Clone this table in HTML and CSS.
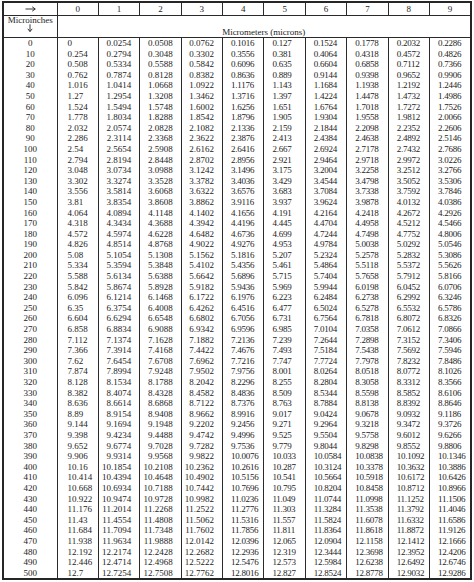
FILE: index.html
```html
<!DOCTYPE html>
<html lang="en">
<head>
<meta charset="utf-8">
<title>Microinches to micrometers</title>
<link rel="stylesheet" href="styles.css">
</head>
<body>
<div class="page">
<table class="conv">
<colgroup><col class="c-lab"><col span="10" class="c-val"></colgroup>
<thead>
<tr class="h1"><th class="corner"><svg class="right" width="11" height="6" viewBox="0 0 11 6" aria-label="→"><path d="M0.5 3 H10" stroke="#222" stroke-width="0.9" fill="none"/><path d="M7.2 0.8 L10.3 3 L7.2 5.2" stroke="#222" stroke-width="0.9" fill="none"/></svg></th><th>0</th><th>1</th><th>2</th><th>3</th><th>4</th><th>5</th><th>6</th><th>7</th><th>8</th><th>9</th></tr>
<tr class="h2"><th class="lab-head"><span class="lab-text">Microinches</span><svg class="down" width="6" height="8" viewBox="0 0 6 8" aria-label="↓"><path d="M3 0.3 V7.4" stroke="#222" stroke-width="0.9" fill="none"/><path d="M0.8 4.8 L3 7.6 L5.2 4.8" stroke="#222" stroke-width="0.9" fill="none"/></svg></th><th class="unit" colspan="10">Micrometers (microns)</th></tr>
</thead>
<tbody>
<tr><td>0</td><td>0</td><td>0.0254</td><td>0.0508</td><td>0.0762</td><td>0.1016</td><td>0.127</td><td>0.1524</td><td>0.1778</td><td>0.2032</td><td>0.2286</td></tr>
<tr><td>10</td><td>0.254</td><td>0.2794</td><td>0.3048</td><td>0.3302</td><td>0.3556</td><td>0.381</td><td>0.4064</td><td>0.4318</td><td>0.4572</td><td>0.4826</td></tr>
<tr><td>20</td><td>0.508</td><td>0.5334</td><td>0.5588</td><td>0.5842</td><td>0.6096</td><td>0.635</td><td>0.6604</td><td>0.6858</td><td>0.7112</td><td>0.7366</td></tr>
<tr><td>30</td><td>0.762</td><td>0.7874</td><td>0.8128</td><td>0.8382</td><td>0.8636</td><td>0.889</td><td>0.9144</td><td>0.9398</td><td>0.9652</td><td>0.9906</td></tr>
<tr><td>40</td><td>1.016</td><td>1.0414</td><td>1.0668</td><td>1.0922</td><td>1.1176</td><td>1.143</td><td>1.1684</td><td>1.1938</td><td>1.2192</td><td>1.2446</td></tr>
<tr><td>50</td><td>1.27</td><td>1.2954</td><td>1.3208</td><td>1.3462</td><td>1.3716</td><td>1.397</td><td>1.4224</td><td>1.4478</td><td>1.4732</td><td>1.4986</td></tr>
<tr><td>60</td><td>1.524</td><td>1.5494</td><td>1.5748</td><td>1.6002</td><td>1.6256</td><td>1.651</td><td>1.6764</td><td>1.7018</td><td>1.7272</td><td>1.7526</td></tr>
<tr><td>70</td><td>1.778</td><td>1.8034</td><td>1.8288</td><td>1.8542</td><td>1.8796</td><td>1.905</td><td>1.9304</td><td>1.9558</td><td>1.9812</td><td>2.0066</td></tr>
<tr><td>80</td><td>2.032</td><td>2.0574</td><td>2.0828</td><td>2.1082</td><td>2.1336</td><td>2.159</td><td>2.1844</td><td>2.2098</td><td>2.2352</td><td>2.2606</td></tr>
<tr><td>90</td><td>2.286</td><td>2.3114</td><td>2.3368</td><td>2.3622</td><td>2.3876</td><td>2.413</td><td>2.4384</td><td>2.4638</td><td>2.4892</td><td>2.5146</td></tr>
<tr><td>100</td><td>2.54</td><td>2.5654</td><td>2.5908</td><td>2.6162</td><td>2.6416</td><td>2.667</td><td>2.6924</td><td>2.7178</td><td>2.7432</td><td>2.7686</td></tr>
<tr><td>110</td><td>2.794</td><td>2.8194</td><td>2.8448</td><td>2.8702</td><td>2.8956</td><td>2.921</td><td>2.9464</td><td>2.9718</td><td>2.9972</td><td>3.0226</td></tr>
<tr><td>120</td><td>3.048</td><td>3.0734</td><td>3.0988</td><td>3.1242</td><td>3.1496</td><td>3.175</td><td>3.2004</td><td>3.2258</td><td>3.2512</td><td>3.2766</td></tr>
<tr><td>130</td><td>3.302</td><td>3.3274</td><td>3.3528</td><td>3.3782</td><td>3.4036</td><td>3.429</td><td>3.4544</td><td>3.4798</td><td>3.5052</td><td>3.5306</td></tr>
<tr><td>140</td><td>3.556</td><td>3.5814</td><td>3.6068</td><td>3.6322</td><td>3.6576</td><td>3.683</td><td>3.7084</td><td>3.7338</td><td>3.7592</td><td>3.7846</td></tr>
<tr><td>150</td><td>3.81</td><td>3.8354</td><td>3.8608</td><td>3.8862</td><td>3.9116</td><td>3.937</td><td>3.9624</td><td>3.9878</td><td>4.0132</td><td>4.0386</td></tr>
<tr><td>160</td><td>4.064</td><td>4.0894</td><td>4.1148</td><td>4.1402</td><td>4.1656</td><td>4.191</td><td>4.2164</td><td>4.2418</td><td>4.2672</td><td>4.2926</td></tr>
<tr><td>170</td><td>4.318</td><td>4.3434</td><td>4.3688</td><td>4.3942</td><td>4.4196</td><td>4.445</td><td>4.4704</td><td>4.4958</td><td>4.5212</td><td>4.5466</td></tr>
<tr><td>180</td><td>4.572</td><td>4.5974</td><td>4.6228</td><td>4.6482</td><td>4.6736</td><td>4.699</td><td>4.7244</td><td>4.7498</td><td>4.7752</td><td>4.8006</td></tr>
<tr><td>190</td><td>4.826</td><td>4.8514</td><td>4.8768</td><td>4.9022</td><td>4.9276</td><td>4.953</td><td>4.9784</td><td>5.0038</td><td>5.0292</td><td>5.0546</td></tr>
<tr><td>200</td><td>5.08</td><td>5.1054</td><td>5.1308</td><td>5.1562</td><td>5.1816</td><td>5.207</td><td>5.2324</td><td>5.2578</td><td>5.2832</td><td>5.3086</td></tr>
<tr><td>210</td><td>5.334</td><td>5.3594</td><td>5.3848</td><td>5.4102</td><td>5.4356</td><td>5.461</td><td>5.4864</td><td>5.5118</td><td>5.5372</td><td>5.5626</td></tr>
<tr><td>220</td><td>5.588</td><td>5.6134</td><td>5.6388</td><td>5.6642</td><td>5.6896</td><td>5.715</td><td>5.7404</td><td>5.7658</td><td>5.7912</td><td>5.8166</td></tr>
<tr><td>230</td><td>5.842</td><td>5.8674</td><td>5.8928</td><td>5.9182</td><td>5.9436</td><td>5.969</td><td>5.9944</td><td>6.0198</td><td>6.0452</td><td>6.0706</td></tr>
<tr><td>240</td><td>6.096</td><td>6.1214</td><td>6.1468</td><td>6.1722</td><td>6.1976</td><td>6.223</td><td>6.2484</td><td>6.2738</td><td>6.2992</td><td>6.3246</td></tr>
<tr><td>250</td><td>6.35</td><td>6.3754</td><td>6.4008</td><td>6.4262</td><td>6.4516</td><td>6.477</td><td>6.5024</td><td>6.5278</td><td>6.5532</td><td>6.5786</td></tr>
<tr><td>260</td><td>6.604</td><td>6.6294</td><td>6.6548</td><td>6.6802</td><td>6.7056</td><td>6.731</td><td>6.7564</td><td>6.7818</td><td>6.8072</td><td>6.8326</td></tr>
<tr><td>270</td><td>6.858</td><td>6.8834</td><td>6.9088</td><td>6.9342</td><td>6.9596</td><td>6.985</td><td>7.0104</td><td>7.0358</td><td>7.0612</td><td>7.0866</td></tr>
<tr><td>280</td><td>7.112</td><td>7.1374</td><td>7.1628</td><td>7.1882</td><td>7.2136</td><td>7.239</td><td>7.2644</td><td>7.2898</td><td>7.3152</td><td>7.3406</td></tr>
<tr><td>290</td><td>7.366</td><td>7.3914</td><td>7.4168</td><td>7.4422</td><td>7.4676</td><td>7.493</td><td>7.5184</td><td>7.5438</td><td>7.5692</td><td>7.5946</td></tr>
<tr><td>300</td><td>7.62</td><td>7.6454</td><td>7.6708</td><td>7.6962</td><td>7.7216</td><td>7.747</td><td>7.7724</td><td>7.7978</td><td>7.8232</td><td>7.8486</td></tr>
<tr><td>310</td><td>7.874</td><td>7.8994</td><td>7.9248</td><td>7.9502</td><td>7.9756</td><td>8.001</td><td>8.0264</td><td>8.0518</td><td>8.0772</td><td>8.1026</td></tr>
<tr><td>320</td><td>8.128</td><td>8.1534</td><td>8.1788</td><td>8.2042</td><td>8.2296</td><td>8.255</td><td>8.2804</td><td>8.3058</td><td>8.3312</td><td>8.3566</td></tr>
<tr><td>330</td><td>8.382</td><td>8.4074</td><td>8.4328</td><td>8.4582</td><td>8.4836</td><td>8.509</td><td>8.5344</td><td>8.5598</td><td>8.5852</td><td>8.6106</td></tr>
<tr><td>340</td><td>8.636</td><td>8.6614</td><td>8.6868</td><td>8.7122</td><td>8.7376</td><td>8.763</td><td>8.7884</td><td>8.8138</td><td>8.8392</td><td>8.8646</td></tr>
<tr><td>350</td><td>8.89</td><td>8.9154</td><td>8.9408</td><td>8.9662</td><td>8.9916</td><td>9.017</td><td>9.0424</td><td>9.0678</td><td>9.0932</td><td>9.1186</td></tr>
<tr><td>360</td><td>9.144</td><td>9.1694</td><td>9.1948</td><td>9.2202</td><td>9.2456</td><td>9.271</td><td>9.2964</td><td>9.3218</td><td>9.3472</td><td>9.3726</td></tr>
<tr><td>370</td><td>9.398</td><td>9.4234</td><td>9.4488</td><td>9.4742</td><td>9.4996</td><td>9.525</td><td>9.5504</td><td>9.5758</td><td>9.6012</td><td>9.6266</td></tr>
<tr><td>380</td><td>9.652</td><td>9.6774</td><td>9.7028</td><td>9.7282</td><td>9.7536</td><td>9.779</td><td>9.8044</td><td>9.8298</td><td>9.8552</td><td>9.8806</td></tr>
<tr><td>390</td><td>9.906</td><td>9.9314</td><td>9.9568</td><td>9.9822</td><td>10.0076</td><td>10.033</td><td>10.0584</td><td>10.0838</td><td>10.1092</td><td>10.1346</td></tr>
<tr><td>400</td><td>10.16</td><td>10.1854</td><td>10.2108</td><td>10.2362</td><td>10.2616</td><td>10.287</td><td>10.3124</td><td>10.3378</td><td>10.3632</td><td>10.3886</td></tr>
<tr><td>410</td><td>10.414</td><td>10.4394</td><td>10.4648</td><td>10.4902</td><td>10.5156</td><td>10.541</td><td>10.5664</td><td>10.5918</td><td>10.6172</td><td>10.6426</td></tr>
<tr><td>420</td><td>10.668</td><td>10.6934</td><td>10.7188</td><td>10.7442</td><td>10.7696</td><td>10.795</td><td>10.8204</td><td>10.8458</td><td>10.8712</td><td>10.8966</td></tr>
<tr><td>430</td><td>10.922</td><td>10.9474</td><td>10.9728</td><td>10.9982</td><td>11.0236</td><td>11.049</td><td>11.0744</td><td>11.0998</td><td>11.1252</td><td>11.1506</td></tr>
<tr><td>440</td><td>11.176</td><td>11.2014</td><td>11.2268</td><td>11.2522</td><td>11.2776</td><td>11.303</td><td>11.3284</td><td>11.3538</td><td>11.3792</td><td>11.4046</td></tr>
<tr><td>450</td><td>11.43</td><td>11.4554</td><td>11.4808</td><td>11.5062</td><td>11.5316</td><td>11.557</td><td>11.5824</td><td>11.6078</td><td>11.6332</td><td>11.6586</td></tr>
<tr><td>460</td><td>11.684</td><td>11.7094</td><td>11.7348</td><td>11.7602</td><td>11.7856</td><td>11.811</td><td>11.8364</td><td>11.8618</td><td>11.8872</td><td>11.9126</td></tr>
<tr><td>470</td><td>11.938</td><td>11.9634</td><td>11.9888</td><td>12.0142</td><td>12.0396</td><td>12.065</td><td>12.0904</td><td>12.1158</td><td>12.1412</td><td>12.1666</td></tr>
<tr><td>480</td><td>12.192</td><td>12.2174</td><td>12.2428</td><td>12.2682</td><td>12.2936</td><td>12.319</td><td>12.3444</td><td>12.3698</td><td>12.3952</td><td>12.4206</td></tr>
<tr><td>490</td><td>12.446</td><td>12.4714</td><td>12.4968</td><td>12.5222</td><td>12.5476</td><td>12.573</td><td>12.5984</td><td>12.6238</td><td>12.6492</td><td>12.6746</td></tr>
<tr><td>500</td><td>12.7</td><td>12.7254</td><td>12.7508</td><td>12.7762</td><td>12.8016</td><td>12.827</td><td>12.8524</td><td>12.8778</td><td>12.9032</td><td>12.9286</td></tr>
</tbody>
</table>
</div>
</body>
</html>
```

FILE: styles.css
```css
html, body {
  margin: 0;
  padding: 0;
  background: #ffffff;
}

body {
  font-family: "Liberation Serif", "Times New Roman", "DejaVu Serif", serif;
  color: #1c1c1c;
}

.page {
  padding: 1px 2px 0 2px;
}

.conv {
  border-collapse: collapse;
  table-layout: fixed;
  width: 470px;
  font-size: 9px;
  border: 2px solid #262626;
}

.c-lab {
  width: 54px;
}

.conv th,
.conv td {
  padding: 0;
  white-space: nowrap;
  overflow: hidden;
  font-weight: normal;
  border-left: 1px solid #2a2a2a;
  border-right: 1px solid #2a2a2a;
}

/* header row 1: column digits */
.h1 th {
  height: 12px;
  line-height: 12px;
  text-align: center;
  border-bottom: 1px solid #2a2a2a;
}

.right {
  display: block;
  margin: 0 auto;
}

/* header row 2 */
.h2 th {
  height: 21px;
  border-bottom: 1px solid #2a2a2a;
}

.lab-head {
  text-align: center;
  vertical-align: top;
}

.lab-text {
  display: block;
  line-height: 8px;
  padding-top: 0;
}

.down {
  display: block;
  margin: 0 auto;
}

.unit {
  text-align: center;
  vertical-align: bottom;
  line-height: 10px;
  padding-bottom: 3px;
}

/* data rows */
.conv tbody td {
  height: 10.6px;
  line-height: 10.6px;
}

.conv tbody td:nth-child(1) {
  text-align: center;
}

.conv tbody td:nth-child(2) {
  text-align: left;
  padding-left: 10px;
}

.conv tbody td:nth-child(3),
.conv tbody td:nth-child(4),
.conv tbody td:nth-child(5) {
  text-align: right;
  padding-right: 8px;
}

.conv tbody td:nth-child(n+6) {
  text-align: left;
  padding-left: 8px;
  letter-spacing: -0.25px;
}
```
